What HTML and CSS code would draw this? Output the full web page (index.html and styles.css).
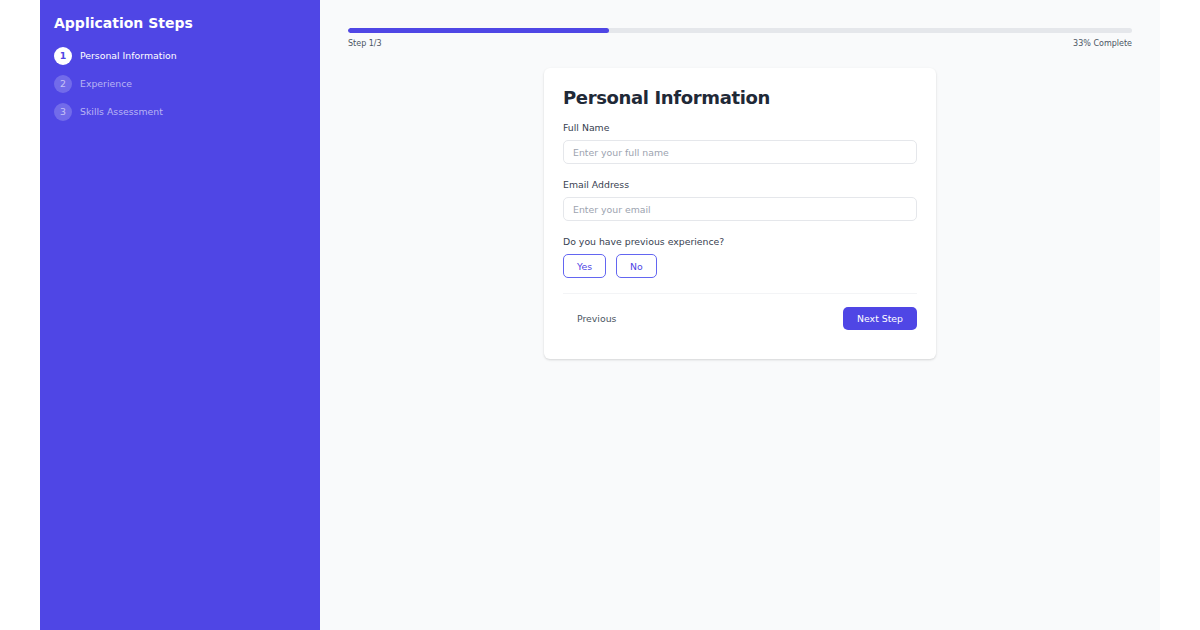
FILE: index.html
```html
<!DOCTYPE html>
<html lang="en">
<head>
    <meta charset="UTF-8">
    <meta name="viewport" content="width=device-width, initial-scale=1.0">
    <title>Application Steps</title>
    <link rel="stylesheet" href="styles.css">
</head>
<body>
    <div class="app">
        <aside class="sidebar">
            <h1>Application Steps</h1>
            <ul class="steps">
                <li class="step active">
                    <span class="step-num">1</span>
                    <span>Personal Information</span>
                </li>
                <li class="step">
                    <span class="step-num">2</span>
                    <span>Experience</span>
                </li>
                <li class="step">
                    <span class="step-num">3</span>
                    <span>Skills Assessment</span>
                </li>
            </ul>
        </aside>

        <main class="main">
            <div class="progress">
                <div class="progress-bar"><div class="progress-fill" style="width: 33.33%"></div></div>
                <div class="progress-text">
                    <span>Step 1/3</span>
                    <span>33% Complete</span>
                </div>
            </div>

            <form class="card">
                <h2>Personal Information</h2>

                <div class="form-group">
                    <label for="fullName">Full Name</label>
                    <input type="text" id="fullName" placeholder="Enter your full name">
                </div>

                <div class="form-group">
                    <label for="email">Email Address</label>
                    <input type="text" id="email" placeholder="Enter your email">
                </div>

                <div class="form-group">
                    <label>Do you have previous experience?</label>
                    <div class="choice-row">
                        <button type="button" class="choice">Yes</button>
                        <button type="button" class="choice">No</button>
                    </div>
                </div>

                <div class="card-footer">
                    <button type="button" class="btn btn-ghost">Previous</button>
                    <button type="submit" class="btn btn-primary">Next Step</button>
                </div>
            </form>
        </main>
    </div>
</body>
</html>
```

FILE: styles.css
```css
* {
    margin: 0;
    padding: 0;
    box-sizing: border-box;
}

body {
    font-family: "DejaVu Sans", sans-serif;
    background: #ffffff;
}

.app {
    width: 1120px;
    height: 630px;
    margin: 0 auto;
    display: flex;
}

/* sidebar */
.sidebar {
    width: 280px;
    flex-shrink: 0;
    background: #4f46e5;
    padding: 13px 14px;
}

.sidebar h1 {
    color: #ffffff;
    font-size: 14px;
    line-height: 20px;
    font-weight: 700;
    margin-bottom: 14px;
}

.steps {
    list-style: none;
    display: flex;
    flex-direction: column;
    gap: 10px;
}

.step {
    display: flex;
    align-items: center;
    gap: 8px;
    font-size: 9.33px;
    line-height: 18px;
    color: rgba(255, 255, 255, 0.6);
}

.step-num {
    width: 18px;
    height: 18px;
    border-radius: 50%;
    background: rgba(255, 255, 255, 0.2);
    display: flex;
    align-items: center;
    justify-content: center;
    font-size: 9.33px;
}

.step.active {
    color: #ffffff;
}

.step.active .step-num {
    background: #ffffff;
    color: #4f46e5;
    font-weight: 700;
}

/* main */
.main {
    flex: 1;
    background: #f9fafb;
    padding: 28px;
}

.progress-bar {
    height: 5px;
    border-radius: 3px;
    background: #e5e7eb;
    overflow: hidden;
}

.progress-fill {
    height: 100%;
    background: #4f46e5;
    border-radius: 3px;
}

.progress-text {
    display: flex;
    justify-content: space-between;
    margin-top: 5px;
    font-size: 8px;
    line-height: 12px;
    color: #4b5563;
}

.card {
    width: 392px;
    margin: 18px auto 0;
    background: #ffffff;
    border-radius: 6px;
    box-shadow: 0 1px 3px rgba(0, 0, 0, 0.1), 0 1px 2px rgba(0, 0, 0, 0.06);
    padding: 19px 19px 29px;
}

.card h2 {
    font-size: 18px;
    line-height: 22px;
    font-weight: 700;
    letter-spacing: -0.02em;
    color: #1f2937;
    margin-bottom: 12px;
}

.form-group {
    margin-bottom: 14px;
}

.form-group label {
    display: block;
    font-size: 9.33px;
    line-height: 14px;
    color: #374151;
    margin-bottom: 5px;
}

.form-group input {
    width: 100%;
    height: 24px;
    padding: 0 9px;
    border: 1px solid #e5e7eb;
    border-radius: 5px;
    font-family: inherit;
    font-size: 9.33px;
    color: #111827;
    outline: none;
}

.form-group input::placeholder {
    color: #9ca3af;
}

.choice-row {
    display: flex;
    gap: 10px;
}

.choice {
    height: 24px;
    padding: 0 13px;
    border: 1px solid #6366f1;
    border-radius: 5px;
    background: #ffffff;
    color: #4f46e5;
    font-family: inherit;
    font-size: 9.33px;
    cursor: pointer;
}

.card-footer {
    display: flex;
    justify-content: space-between;
    align-items: center;
    border-top: 1px solid #f3f4f6;
    padding-top: 13px;
    margin-top: 15px;
}

.btn {
    height: 23px;
    padding: 0 14px;
    border: none;
    border-radius: 5px;
    font-family: inherit;
    font-size: 9.33px;
    cursor: pointer;
}

.btn-ghost {
    background: transparent;
    color: #4b5563;
}

.btn-primary {
    background: #4f46e5;
    color: #ffffff;
}
```
